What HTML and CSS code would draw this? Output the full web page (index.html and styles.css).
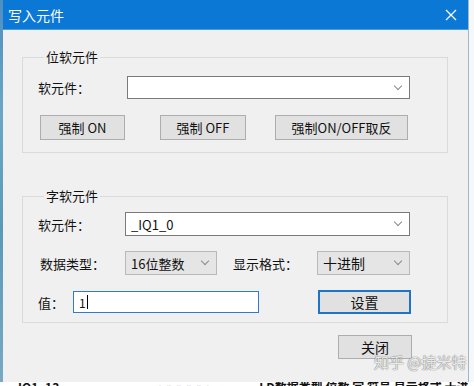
FILE: index.html
```html
<!DOCTYPE html>
<html lang="zh-CN">
<head>
    <meta charset="UTF-8">
    <title>写入元件</title>
    <link rel="stylesheet" href="styles.css">
</head>
<body>
    <div class="screen">
        <div class="strip"></div>
        <div class="window">
            <!-- 标题栏 -->
            <div class="titlebar">
                <span class="title">写入元件</span>
                <svg class="close" width="12" height="12" viewBox="0 0 12 12">
                    <path d="M1 1L11 11M11 1L1 11" stroke="#fff" stroke-width="1.3" fill="none"/>
                </svg>
            </div>
            <div class="content">
                <!-- 位软元件 -->
                <fieldset class="group bit">
                    <legend>位软元件</legend>
                    <div class="row">
                        <span class="label">软元件：</span>
                        <div class="combo wide"><span></span><i class="arrow"></i></div>
                    </div>
                    <div class="row btns">
                        <div class="btn b1">强制 ON</div>
                        <div class="btn b2">强制 OFF</div>
                        <div class="btn b3">强制ON/OFF取反</div>
                    </div>
                </fieldset>
                <!-- 字软元件 -->
                <fieldset class="group word">
                    <legend>字软元件</legend>
                    <div class="row">
                        <span class="label">软元件：</span>
                        <div class="combo wide2"><span>_IQ1_0</span><i class="arrow"></i></div>
                    </div>
                    <div class="row r2">
                        <span class="label l2">数据类型：</span>
                        <div class="combo gray small"><span>16位整数</span><i class="arrow"></i></div>
                        <span class="label l3">显示格式：</span>
                        <div class="combo gray mid"><span class="big">十进制</span><i class="arrow"></i></div>
                    </div>
                    <div class="row r3">
                        <span class="label l4">值：</span>
                        <div class="input">1<b class="caret"></b></div>
                        <div class="btn set">设置</div>
                    </div>
                </fieldset>
                <div class="row foot">
                    <div class="btn closebtn">关闭</div>
                </div>
            </div>
        </div>
        <div class="rightside"></div>
    </div>
    <div class="under">
        <span>IQ1_13</span><span class="u2">ꟷꟷꟷꟷꟷ</span><span class="u3">LD数据类型 位数 字 符号 显示格式 十进</span>
    </div>
    <div class="mark">知乎 @捷米特</div>
</body>
</html>
```

FILE: styles.css
```css
body {
    margin: 0;
    width: 474px;
    height: 386px;
    overflow: hidden;
    position: relative;
    background: #fff;
    font-family: "Noto Sans CJK SC", "Liberation Sans", sans-serif;
    font-size: 13px;
    color: #111;
}

.screen {
    display: flex;
    height: 382px;
}

.strip {
    width: 3px;
    background: linear-gradient(180deg, #4f8fc0, #6aa7c6 30%, #5a9ab8 60%, #77a9c4);
}

.window {
    width: 465px;
    background: #f0f0f0;
    border-right: 1px solid #9cb9d4;
}

.rightside {
    flex: 1;
    background: #f7f7f7;
}

.titlebar {
    height: 30px;
    background: #0b78d6;
    display: flex;
    align-items: center;
    justify-content: space-between;
    padding: 0 11px 0 5px;
    border-bottom: 1px solid #4a9ae0;
    box-sizing: border-box;
}

.title {
    color: #fff;
    font-size: 14px;
}

.content {
    padding: 19px 17px 0 19px;
}

.group {
    margin: 0;
    width: 426px;
    box-sizing: border-box;
    border: 1px solid #dadada;
    padding: 11px 0 12px 15px;
}

.group legend {
    padding: 0 2px;
    margin-left: 6px;
    font-size: 13px;
    line-height: 16px;
}

.word {
    margin-top: 35px;
    padding-top: 8px;
    padding-bottom: 8px;
}

.row {
    display: flex;
    align-items: center;
}

.label {
    width: 89px;
    padding-left: 0;
}

.combo {
    height: 23px;
    box-sizing: border-box;
    border: 1px solid #7a7a7a;
    background: #fff;
    display: flex;
    align-items: center;
    justify-content: space-between;
    padding: 0 8px 0 5px;
}

.wide {
    width: 283px;
}

.wide2 {
    width: 285px;
    height: 24px;
    margin-left: -2px;
}

.arrow {
    width: 5px;
    height: 5px;
    border-right: 1px solid #8a8a8a;
    border-bottom: 1px solid #8a8a8a;
    transform: rotate(45deg);
    margin-top: -4px;
}

.btns {
    margin-top: 16px;
}

.btn {
    height: 25px;
    box-sizing: border-box;
    background: #e1e1e1;
    border: 1px solid #adadad;
    display: flex;
    align-items: center;
    justify-content: center;
}

.b1 {
    width: 85px;
    margin-left: 2px;
}

.b2 {
    width: 86px;
    margin-left: 35px;
}

.b3 {
    width: 133px;
    margin-left: 29px;
}

.r2 {
    margin-top: 15px;
}

.l2 {
    width: 85px;
    padding-left: 2px;
}

.gray {
    background: #e5e5e5;
    border-color: #b9b9b9;
    height: 24px;
}

.small {
    width: 92px;
}

.mid {
    width: 93px;
}

.big {
    font-size: 14px;
}

.l3 {
    width: 84px;
    margin-left: 16px;
}

.r3 {
    margin-top: 15px;
}

.l4 {
    width: 35px;
}

.input {
    width: 186px;
    height: 22px;
    box-sizing: border-box;
    border: 1px solid #2e7bd0;
    background: #fff;
    padding-left: 5px;
    display: flex;
    align-items: center;
    font-size: 12px;
}

.caret {
    width: 1px;
    height: 14px;
    background: #000;
    margin-left: 1px;
}

.set {
    width: 93px;
    height: 24px;
    margin-left: 59px;
    border: 2px solid #1f74c8;
    font-size: 14px;
}

.foot {
    justify-content: flex-end;
    margin-top: 12px;
    padding-right: 39px;
}

.closebtn {
    width: 74px;
    height: 24px;
    font-size: 14px;
}

.under {
    height: 4px;
    overflow: hidden;
    display: flex;
    gap: 10px;
    padding-left: 18px;
    font-size: 12px;
    line-height: 10px;
    font-weight: bold;
    color: #111;
}

.u2 {
    margin-left: 90px;
    color: #888;
}

.u3 {
    margin-left: 40px;
}

/* 水印 */
.mark {
    position: absolute;
    left: 374px;
    top: 351px;
    font-size: 15px;
    color: rgba(255, 255, 255, 0.85);
    text-shadow: 0 0 1px #777, 0 0 1px #777;
}
```
